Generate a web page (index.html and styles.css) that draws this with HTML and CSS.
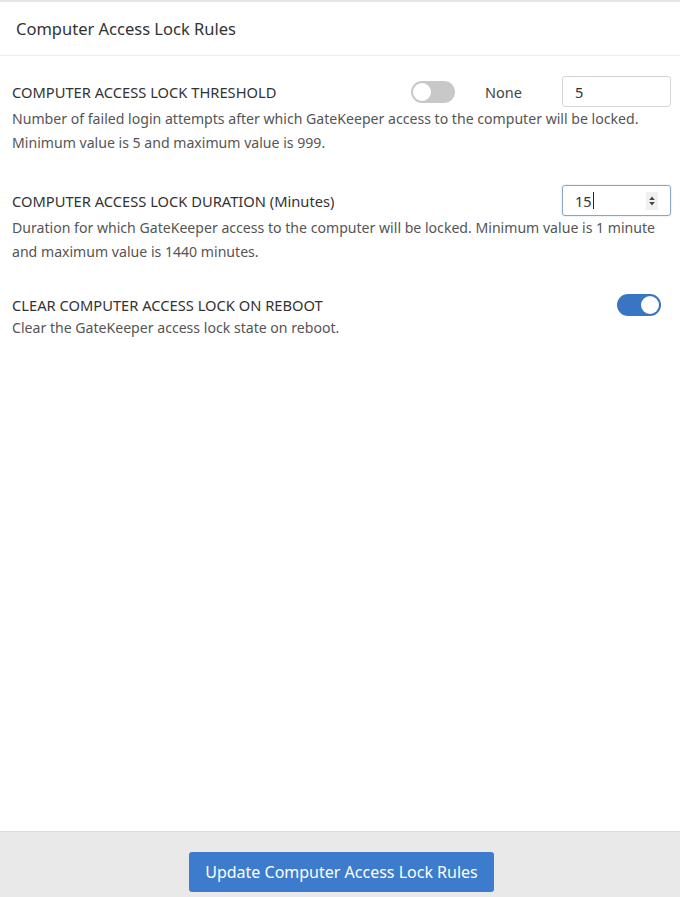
FILE: index.html
```html
<!DOCTYPE html>
<html>
<head>
<meta charset="utf-8">
<link rel="stylesheet" href="styles.css">
</head>
<body>
<div class="page">
  <div class="header">Computer Access Lock Rules</div>
  <div class="content">
    <div class="setting">
      <div class="row">
        <div class="label">COMPUTER ACCESS LOCK THRESHOLD</div>
        <div class="controls">
          <span class="toggle"><span class="knob"></span></span>
          <span class="none">None</span>
          <span class="input">5</span>
        </div>
      </div>
      <div class="desc">Number of failed login attempts after which GateKeeper access to the computer will be locked. Minimum value is 5 and maximum value is 999.</div>
    </div>
    <div class="setting">
      <div class="row">
        <div class="label">COMPUTER ACCESS LOCK DURATION (Minutes)</div>
        <div class="controls">
          <span class="input focus">15<span class="caret"></span>
            <span class="spin"><svg width="8" height="14" viewBox="0 0 8 14"><path d="M4 2.5 L6.8 6 L1.2 6 Z" fill="#444"/><path d="M4 11.5 L6.8 8 L1.2 8 Z" fill="#444"/></svg></span>
          </span>
        </div>
      </div>
      <div class="desc">Duration for which GateKeeper access to the computer will be locked. Minimum value is 1 minute and maximum value is 1440 minutes.</div>
    </div>
    <div class="setting">
      <div class="row short">
        <div class="label">CLEAR COMPUTER ACCESS LOCK ON REBOOT</div>
        <div class="controls">
          <span class="toggle on"><span class="knob"></span></span>
        </div>
      </div>
      <div class="desc">Clear the GateKeeper access lock state on reboot.</div>
    </div>
  </div>
  <div class="footer">
    <button class="btn">Update Computer Access Lock Rules</button>
  </div>
</div>
</body>
</html>
```
FILE: styles.css
```css
html, body {
  margin: 0;
  padding: 0;
  height: 100%;
}
body {
  font-family: "Noto Sans", "Open Sans", sans-serif;
  color: #333;
  background: #fff;
}
.page {
  height: 897px;
  display: flex;
  flex-direction: column;
  border-top: 2px solid #e6e6e6;
  box-sizing: border-box;
}
.header {
  height: 54px;
  box-sizing: border-box;
  padding: 0 16px;
  display: flex;
  align-items: center;
  font-size: 16.5px;
  color: #333;
  border-bottom: 1px solid #ececec;
}
.content {
  flex: 1;
  padding: 20px 9px 0 12px;
}
.setting {
  margin-bottom: 30px;
}
.row {
  display: flex;
  justify-content: space-between;
  align-items: center;
  min-height: 31px;
}
.row.short {
  min-height: 22px;
}
.label {
  font-size: 14.7px;
  color: #333;
}
.controls {
  display: flex;
  align-items: center;
}
.toggle {
  width: 44px;
  height: 22px;
  border-radius: 11px;
  background: #c8c8c8;
  position: relative;
  display: inline-block;
}
.toggle .knob {
  position: absolute;
  top: 2px;
  left: 2px;
  width: 18px;
  height: 18px;
  border-radius: 50%;
  background: #fff;
}
.toggle.on {
  background: #3a75c4;
  margin-right: 10px;
}
.toggle.on .knob {
  left: 24px;
}
.none {
  font-size: 14.5px;
  margin: 0 40px 0 30px;
  color: #444;
}
.input {
  width: 109px;
  height: 31px;
  box-sizing: border-box;
  border: 1px solid #d6d6d6;
  border-radius: 3px;
  padding: 0 12px;
  font-size: 14.5px;
  display: flex;
  align-items: center;
  position: relative;
}
.input.focus {
  border-color: #8aa6c6;
  box-shadow: 0 0 2px rgba(90, 130, 180, 0.35);
}
.caret {
  display: inline-block;
  width: 1px;
  height: 17px;
  background: #222;
  margin-left: 1px;
}
.spin {
  position: absolute;
  right: 12px;
  top: 6px;
  width: 12px;
  height: 18px;
  background: #f0f0f0;
  display: flex;
  align-items: center;
  justify-content: center;
}
.desc {
  font-size: 14.1px;
  line-height: 24px;
  color: #555;
  padding-right: 10px;
}
.footer {
  height: 66px;
  background: #e9e9e9;
  border-top: 1px solid #dcdcdc;
  display: flex;
  justify-content: center;
  padding-top: 20px;
  box-sizing: border-box;
}
.btn {
  width: 305px;
  height: 40px;
  margin-left: 3px;
  background: #3d7ccc;
  color: #fff;
  border: none;
  border-radius: 3px;
  font-family: "Noto Sans", "Open Sans", sans-serif;
  font-size: 16px;
}
```
